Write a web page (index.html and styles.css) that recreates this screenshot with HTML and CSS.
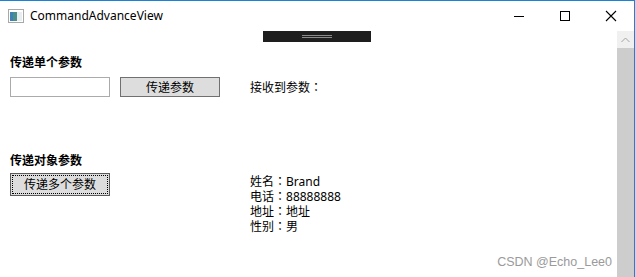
FILE: index.html
```html
<!DOCTYPE html>
<html>
<head>
<meta charset="utf-8">
<link rel="stylesheet" href="styles.css">
</head>
<body>
<div class="window">
  <div class="titlebar">
    <svg class="app-icon" width="16" height="14" viewBox="0 0 16 14">
      <rect x="0.5" y="0.5" width="15" height="13" fill="#fff" stroke="#a8a8a8"/>
      <rect x="2" y="3" width="7" height="9" fill="#4a8f8a"/>
      <rect x="2" y="3" width="3" height="9" fill="#3f7fb8"/>
      <rect x="9" y="3" width="5" height="9" fill="#e8eef0"/>
    </svg>
    <span class="title">CommandAdvanceView</span>
    <div class="caption">
      <div class="cap-btn"><svg width="12" height="12" viewBox="0 0 12 12"><path d="M1 6.5H11" stroke="#000" stroke-width="1"/></svg></div>
      <div class="cap-btn"><svg width="12" height="12" viewBox="0 0 12 12"><rect x="1.5" y="1.5" width="9" height="9" fill="none" stroke="#000"/></svg></div>
      <div class="cap-btn"><svg width="12" height="12" viewBox="0 0 12 12"><path d="M1 1L11 11M11 1L1 11" stroke="#000" stroke-width="1.1"/></svg></div>
    </div>
  </div>
  <div class="body">
    <div class="client">
      <div class="section first">
        <div class="heading">传递单个参数</div>
        <div class="row">
          <div class="textbox"></div>
          <div class="btn">传递参数</div>
          <div class="result">接收到参数<span class="colon">：</span></div>
        </div>
      </div>
      <div class="section second">
        <div class="heading">传递对象参数</div>
        <div class="row top">
          <div class="btn focused"><span class="focus-rect">传递多个参数</span></div>
          <div class="info">
            <div class="line">姓名<span class="colon">：</span>Brand</div>
            <div class="line">电话<span class="colon">：</span>88888888</div>
            <div class="line">地址<span class="colon">：</span>地址</div>
            <div class="line">性别<span class="colon">：</span>男</div>
          </div>
        </div>
      </div>
      <div class="debug-bar"><span class="grip"></span></div>
      <div class="watermark">CSDN @Echo_Lee0</div>
    </div>
    <div class="scrollbar">
      <div class="sb-up"><svg width="9" height="6" viewBox="0 0 9 6"><path d="M0.5 5L4.5 1L8.5 5" fill="none" stroke="#a3a3a3" stroke-width="1"/></svg></div>
      <div class="sb-thumb"></div>
    </div>
  </div>
</div>
</body>
</html>
```
FILE: styles.css
```css
* { box-sizing: border-box; }
html, body { margin: 0; padding: 0; }
body {
  width: 635px;
  height: 277px;
  overflow: hidden;
  background: #fff;
  font-family: "Noto Sans", "Noto Sans CJK SC", sans-serif;
  font-size: 12px;
  color: #000;
}
.window {
  width: 635px;
  height: 277px;
  border-top: 1px solid #1883d7;
  border-right: 1px solid #1883d7;
  display: flex;
  flex-direction: column;
}
.titlebar {
  height: 30px;
  flex: none;
  display: flex;
  align-items: center;
  padding-left: 8px;
}
.app-icon { margin-right: 6px; margin-top: -1px; }
.title { font-size: 12px; line-height: 16px; margin-top: -1px; }
.caption { margin-left: auto; display: flex; height: 30px; }
.cap-btn {
  width: 46px;
  height: 30px;
  display: flex;
  align-items: center;
  justify-content: center;
}
.body { flex: 1; display: flex; min-height: 0; }
.client {
  flex: 1;
  position: relative;
  padding: 24px 0 0 10px;
}
.heading {
  font-weight: bold;
  line-height: 15px;
  height: 15px;
}
.row { display: flex; align-items: center; margin-top: 7px; }
.row.top { align-items: flex-start; margin-top: 5px; }
.textbox {
  width: 100px;
  height: 20px;
  border: 1px solid #ababab;
  background: #fff;
}
.btn {
  width: 100px;
  height: 20px;
  margin-left: 10px;
  border: 1px solid #707070;
  background: #dddddd;
  display: flex;
  align-items: center;
  justify-content: center;
  line-height: 15px;
}
.result { margin-left: 30px; line-height: 15px; }
.colon { font-family: "Noto Sans CJK TC", sans-serif; }
.second { margin-top: 56px; }
.btn.focused {
  margin-left: 0;
  height: 23px;
  border-color: #5a5a5a;
  padding: 1px;
}
.focus-rect {
  flex: 1;
  align-self: stretch;
  border: 1px dotted #000;
  display: flex;
  align-items: center;
  justify-content: center;
}
.info { margin-left: 140px; }
.line { height: 15px; line-height: 15px; white-space: nowrap; }
.debug-bar {
  position: absolute;
  left: 263px;
  top: 0;
  width: 108px;
  height: 11px;
  background: #1e1e1e;
  display: flex;
  align-items: center;
  justify-content: center;
}
.grip {
  width: 30px;
  height: 3px;
  border-top: 1px solid #8a8a8a;
  border-bottom: 1px solid #8a8a8a;
}
.watermark {
  position: absolute;
  right: 5px;
  bottom: 8px;
  font-family: "Liberation Sans", Arial, sans-serif;
  font-size: 12.5px;
  color: #9a9a9a;
}
.scrollbar {
  width: 17px;
  flex: none;
  display: flex;
  flex-direction: column;
  background: #cdcdcd;
}
.sb-up {
  height: 17px;
  background: #f0f0f0;
  display: flex;
  align-items: center;
  justify-content: center;
}
.sb-thumb { flex: 1; background: #cdcdcd; }
```
